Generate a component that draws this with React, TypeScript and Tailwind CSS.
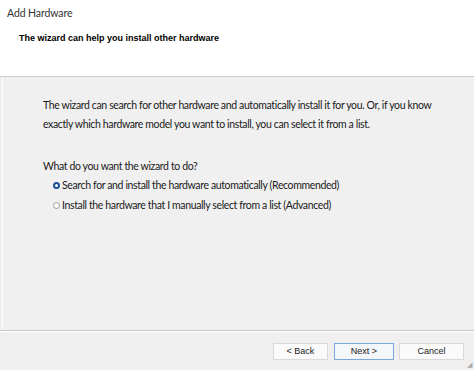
const ui = { fontFamily: 'Lato, "Open Sans", sans-serif' };
const classic = { fontFamily: '"Liberation Sans", Arial, sans-serif' };

const Radio = ({ checked }: { checked?: boolean }) =>
  checked ? (
    <span className="inline-block w-[7px] h-[7px] rounded-full border-[2px] border-[#1d4f91] bg-white shrink-0" />
  ) : (
    <span className="inline-block w-[7px] h-[7px] rounded-full border border-[#9a9a9a] bg-white shrink-0" />
  );

const Btn = ({ label, w, focused }: { label: string; w: string; focused?: boolean }) => (
  <button
    className={
      (focused
        ? 'border-[#7aa7dc] bg-[#f4f7fa] '
        : 'border-[#d9d9d9] bg-[#fafafa] ') +
      w +
      ' h-[17px] border text-[9px] text-[#222] leading-none'
    }
    style={classic}
  >
    {label}
  </button>
);

export default function App() {
  return (
    <div className="w-[474px] h-[370px] bg-[#f0f0f0] flex flex-col overflow-hidden text-[#1a1a1a]">
      {/* header */}
      <div className="h-[77px] bg-white border-b border-[#cfcfcf] shrink-0">
        <div className="pl-[7px] pt-[6px] text-[10.5px] tracking-[-0.1px] text-[#333]" style={ui}>
          Add Hardware
        </div>
        <div className="pl-[19px] pt-[10px] text-[9px] font-bold text-black" style={classic}>
          The wizard can help you install other hardware
        </div>
      </div>

      {/* body */}
      <div
        className="flex-1 pl-[40px] pt-[19px] border-l border-white ml-[2px] text-[10.5px] tracking-[-0.37px] whitespace-nowrap"
        style={ui}
      >
        <p className="leading-[19px]">
          The wizard can search for other hardware and automatically install it for you. Or, if you know
          <br />
          exactly which hardware model you want to install, you can select it from a list.
        </p>
        <p className="leading-[19px] mt-[23px]">What do you want the wizard to do?</p>
        <div className="pl-[10px] -mt-[1px] flex flex-col">
          <label className="flex items-center gap-[2px] leading-[20px]">
            <Radio checked />
            Search for and install the hardware automatically (Recommended)
          </label>
          <label className="flex items-center gap-[2px] leading-[20px]">
            <Radio />
            Install the hardware that I manually select from a list (Advanced)
          </label>
        </div>
      </div>

      {/* footer */}
      <div className="h-[40px] shrink-0 border-t border-[#c8c8c8] shadow-[inset_0_1px_0_#ffffff] flex items-start justify-end pr-[10px] pt-[12px] relative">
        <Btn label="< Back" w="w-[55px]" />
        <div className="w-[6px]" />
        <Btn label="Next >" w="w-[60px]" focused />
        <div className="w-[5px]" />
        <Btn label="Cancel" w="w-[65px]" />
        <span className="absolute right-[2px] bottom-[2px] text-[7px] text-[#aaa] leading-none">◢</span>
      </div>
    </div>
  );
}
